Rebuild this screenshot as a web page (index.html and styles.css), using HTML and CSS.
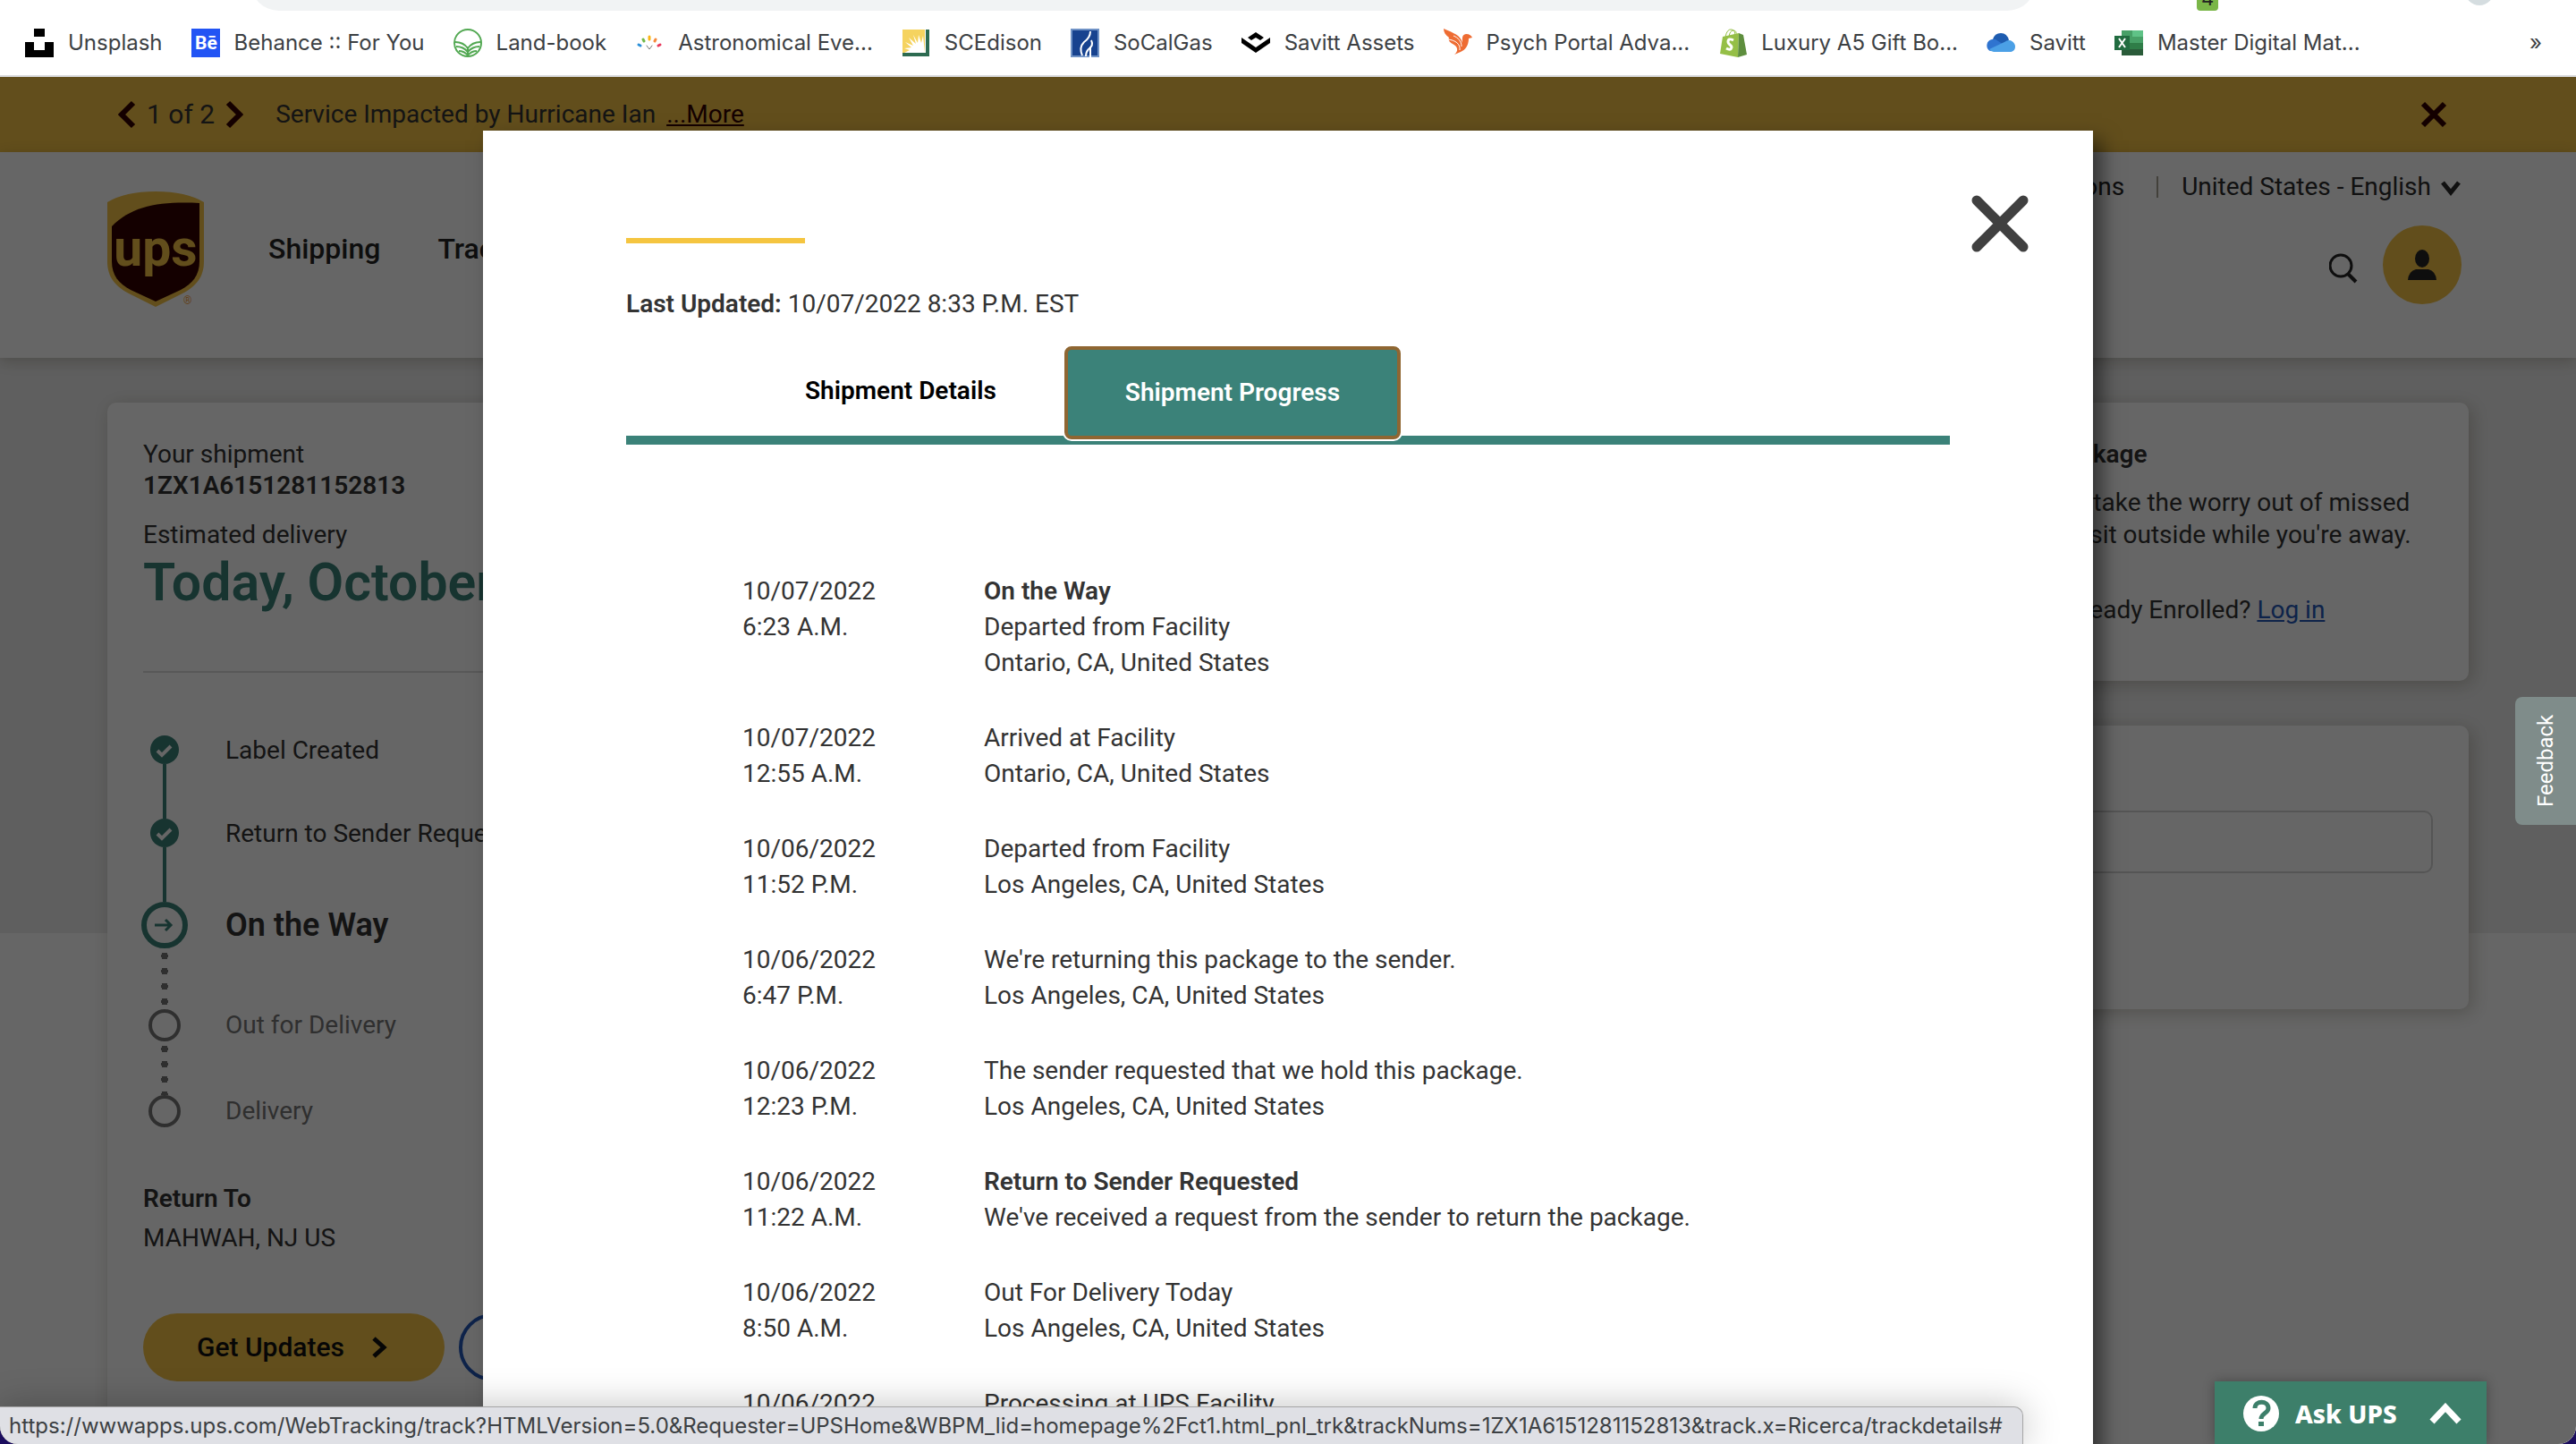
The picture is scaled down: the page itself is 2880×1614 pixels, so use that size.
FILE: index.html
```html
<!DOCTYPE html>
<html lang="en">
<head>
<meta charset="utf-8">
<title>UPS Tracking</title>
<link rel="stylesheet" href="styles.css">
</head>
<body>
<div class="window">
  <div class="chrome">
    <div class="toolbar">
      <div class="omnibox"></div>
      <span class="badge">4</span>
      <span class="avatar"></span>
    </div>
    <nav class="bookmarks" aria-label="Bookmarks">
      <a href="#"><svg viewBox="0 0 32 32"><path d="M10 0h12v9H10zM0 15h10v9h12v-9h10v17H0z"/></svg>Unsplash</a>
      <a href="#"><svg viewBox="0 0 32 32"><path fill="#2254f4" d="M0 0h32v32H0z"/><text x="4" y="23" font-family="Roboto, sans-serif" font-size="21" font-weight="700" fill="#fff">Bē</text></svg>Behance :: For You</a>
      <a href="#"><svg viewBox="0 0 32 32" fill="none" stroke="#52a852" stroke-width="2"><circle cx="16" cy="16" r="15"/><path d="M2 15q9 0 14 7 5-7 14-7M3 20q8 0 13 6 5-6 13-6M6 25q6 0 10 5 4-5 10-5M16 20v11"/></svg>Land-book</a>
      <a href="#"><svg viewBox="0 0 32 32" fill="none" stroke-width="3" stroke-linecap="round"><path stroke="#fbb615" d="M16 9v3"/><path stroke="#72b84c" d="M9 12l1 2"/><path stroke="#f58a3c" d="M23 12l-1 2"/><path stroke="#2b90d9" d="M4 18l2 1"/><path stroke="#e8375b" d="M28 18l-2 1"/><path stroke="#777" stroke-width="1" d="M13 19l3 4 3-4"/></svg>Astronomical Eve...</a>
      <a href="#"><svg viewBox="0 0 32 32"><path fill="#f5d35f" d="M1 1h25v26H1z"/><path fill="#2d6b51" d="M27 1h4v30H1v-4h26z"/><path fill="#fff" d="M26 27H3l6-3-6-2 8-1-7-6 9 4-5-9 8 7-3-10 5 9 1-9 3 9 2-8z"/></svg>SCEdison</a>
      <a href="#"><svg viewBox="0 0 32 32"><path fill="#6f92c6" d="M0 0h32v32H0z"/><path fill="#17428f" d="M2 2h28v28H2z"/><path fill="none" stroke="#fff" stroke-width="2" d="M22 3q0 7-7 12-6 6-2 15M23 13q3 6-3 10-3 3-3 8M22 20v12"/></svg>SoCalGas</a>
      <a href="#"><svg viewBox="0 0 32 32"><path d="M16 4l9 6-4 3-5-3-5 3-4-3zM0 10l16 11 16-11v6L16 27 0 16z"/></svg>Savitt Assets</a>
      <a href="#"><svg viewBox="0 0 32 32"><path fill="#ee6c33" d="M0 0c11 5 19 7 21 16 0-5-1-9 4-10 4 0 6 2 7 4l-4 1c0 8-4 13-9 15l-7 3c5-4 4-9-2-12-4-2-5-5-4-7C2 7 0 4 0 0z"/><path fill="none" stroke="#fff" d="M5 12c8 1 14 5 13 12M11 8c5 2 9 6 9 12"/></svg>Psych Portal Adva...</a>
      <a href="#"><svg viewBox="0 0 32 32"><path fill="none" stroke="#95bf47" stroke-width="1" d="M8 9q2-9 7-8t3 7M12 9q1-7 5-7t3 6"/><path fill="#95bf47" d="M5 9l18-4-1 27L2 28z"/><path fill="#5e8e3e" d="M23 5l5 2 4 22-10 3z"/><path fill="none" stroke="#fff" stroke-width="3" d="M17 13q-6-3-6 2c0 3 4 3 4 6q-1 4-6 1"/></svg>Luxury A5 Gift Bo...</a>
      <a href="#"><svg viewBox="0 0 32 32"><path fill="#1e5cb0" d="M7 12q2-7 9-7t9 8l-8 6z"/><path fill="#2f74d0" d="M6 12a8 8 0 0 1 7 2l11 7-20 4a7 7 0 0 1 2-13z"/><path fill="#4ba0e6" d="M3 23l17-8a8 7 0 0 1 6-2c8 2 8 13 0 13H8q-3 0-5-3z"/></svg>Savitt</a>
      <a href="#"><svg viewBox="0 0 32 32"><path fill="#47a067" d="M8 2h24v28H8z"/><path fill="#5fc287" d="M20 2h12v7H20z"/><path fill="#2f7d48" d="M8 16h24v7H8z"/><path fill="#2a5b39" d="M8 23h24v7H8z"/><path fill="#216c40" d="M0 8h17v16H0z"/><path fill="none" stroke="#fff" stroke-width="2" d="M5 11l7 10M12 11L5 21"/></svg>Master Digital Mat...</a>
      <button class="overflow" aria-label="More bookmarks">»</button>
    </nav>
  </div>

  <div class="viewport">
    <div class="page">
      <div class="notice">
        <button aria-label="Previous alert"><svg width="20" height="32" viewBox="0 0 20 32"><path d="M17 3L4 16l13 13"/></svg></button>
        <span class="count">1 of 2</span>
        <button aria-label="Next alert"><svg width="20" height="32" viewBox="0 0 20 32"><path d="M3 3l13 13L3 29"/></svg></button>
        <p>Service Impacted by Hurricane Ian</p>
        <a href="#">...More</a>
        <button class="dismiss" aria-label="Dismiss alert"><svg width="30" height="30" viewBox="0 0 30 30"><path d="M3 3l24 24M27 3L3 27"/></svg></button>
      </div>

      <header class="header">
        <a class="logo" href="#" aria-label="UPS home">
          <svg width="108" height="130" viewBox="0 0 108 130">
            <path fill="#f5c346" d="M0 12Q20 0 54 0t54 12v66c0 18-9 28-24 36l-30 15-30-15C9 106 0 96 0 78z"/>
            <path fill="#300" d="M5 39C28 16 58 11 103 13v65c0 16-8 25-21 32l-28 13-28-13C13 103 5 94 5 78z"/>
            <text x="54" y="83" text-anchor="middle" font-family="Roboto, sans-serif" font-size="57" font-weight="700" fill="#f5c346">ups</text>
            <text x="85" y="126" font-family="Roboto, sans-serif" font-size="12" fill="#f5a346">®</text>
          </svg>
        </a>
        <nav class="nav" aria-label="Main">
          <a href="#">Shipping</a>
          <a href="#">Tracking</a>
        </nav>
        <div class="tools">
          <div class="locale">
            <a href="#">Locations</a>
            <span class="rule"></span>
            <button>United States - English <svg width="24" height="22" viewBox="0 0 24 22"><path d="M3 6l9 11 9-11" fill="none" stroke="#2b2b2b" stroke-width="5"/></svg></button>
          </div>
          <div class="actions">
            <button class="search" aria-label="Search"><svg width="32" height="34" viewBox="0 0 32 34"><g fill="none" stroke="#242424" stroke-width="3"><circle cx="13" cy="14" r="12"/><path stroke-width="4" d="M21 23l9 9"/></g></svg></button>
            <button class="account" aria-label="Account"><svg width="32" height="34" viewBox="0 0 32 34"><ellipse cx="16" cy="10" rx="8" ry="10" fill="#242424"/><path fill="#242424" d="M0 34q1-10 9-12h14q8 2 9 12z"/></svg></button>
          </div>
        </div>
      </header>

      <main class="main">
        <section class="card shipment">
          <p>Your shipment</p>
          <p><strong>1ZX1A6151281152813</strong></p>
          <p class="estimate">Estimated delivery</p>
          <h1>Today, October 7</h1>
          <ol class="steps">
            <li><span class="track"><svg class="done" viewBox="0 0 32 32"><circle cx="16" cy="16" r="16"/><path d="M8 17l5 5 10-10"/></svg><i class="line"></i></span><span class="label">Label Created</span></li>
            <li><span class="track"><svg class="done" viewBox="0 0 32 32"><circle cx="16" cy="16" r="16"/><path d="M8 17l5 5 10-10"/></svg><i class="line"></i></span><span class="label">Return to Sender Requested</span></li>
            <li class="current"><span class="track"><svg class="now" viewBox="0 0 52 52"><circle cx="26" cy="26" r="23"/><path d="M15 26h18M27 20l6 6-6 6"/></svg><i class="dots"></i></span><span class="label">On the Way</span></li>
            <li class="pending"><span class="track"><i class="ring"></i><i class="dots"></i></span><span class="label">Out for Delivery</span></li>
            <li class="pending"><span class="track"><i class="ring"></i></span><span class="label">Delivery</span></li>
          </ol>
          <div class="return"><strong>Return To</strong><br>MAHWAH, NJ US</div>
          <div class="buttons">
            <button class="primary">Get Updates <svg width="18" height="26" viewBox="0 0 18 26"><path d="M3 3l11 10L3 23" fill="none" stroke="#111" stroke-width="5"/></svg></button>
            <button class="secondary">View Details</button>
          </div>
        </section>
        <div class="side">
          <section class="card choice">
            <h2>Peace of Mind with Your Package</h2>
            <p>UPS My Choice can help you take the worry out of missed<br>deliveries so packages don't sit outside while you're away.</p>
            <div class="enroll">Already Enrolled? <a href="#">Log in</a></div>
          </section>
          <section class="card lookup">
            <label for="number">Track Another</label>
            <input id="number" type="text">
          </section>
        </div>
      </main>
    </div>

    <div class="scrim"></div>

    <div class="modal" role="dialog" aria-label="Shipment progress">
      <button class="close" aria-label="Close"><svg width="64" height="64" viewBox="0 0 64 64"><path d="M6 6l52 52M58 6L6 58" fill="none" stroke="#404040" stroke-width="11" stroke-linecap="round"/></svg></button>
      <div class="accent"></div>
      <p class="updated"><strong>Last Updated:</strong> 10/07/2022 8:33 P.M. EST</p>
      <div class="tabs" role="tablist">
        <button role="tab">Shipment Details</button>
        <button role="tab" class="active" aria-selected="true">Shipment Progress</button>
      </div>
      <table class="events">
        <tr><td>10/07/2022<br>6:23 A.M.</td><td><strong>On the Way</strong><br>Departed from Facility<br>Ontario, CA, United States</td></tr>
        <tr><td>10/07/2022<br>12:55 A.M.</td><td>Arrived at Facility<br>Ontario, CA, United States</td></tr>
        <tr><td>10/06/2022<br>11:52 P.M.</td><td>Departed from Facility<br>Los Angeles, CA, United States</td></tr>
        <tr><td>10/06/2022<br>6:47 P.M.</td><td>We're returning this package to the sender.<br>Los Angeles, CA, United States</td></tr>
        <tr><td>10/06/2022<br>12:23 P.M.</td><td>The sender requested that we hold this package.<br>Los Angeles, CA, United States</td></tr>
        <tr><td>10/06/2022<br>11:22 A.M.</td><td><strong>Return to Sender Requested</strong><br>We've received a request from the sender to return the package.</td></tr>
        <tr><td>10/06/2022<br>8:50 A.M.</td><td>Out For Delivery Today<br>Los Angeles, CA, United States</td></tr>
        <tr><td>10/06/2022</td><td>Processing at UPS Facility</td></tr>
      </table>
    </div>

    <button class="feedback">Feedback</button>
    <button class="ask"><svg width="40" height="40" viewBox="0 0 40 40"><circle cx="20" cy="20" r="20" fill="#fff"/><path d="M13 14c0-9 15-9 15 0 0 6-8 5-8 12" fill="none" stroke="#3d7f6a" stroke-width="5"/><path fill="#3d7f6a" d="M17 29h6v5h-6z"/></svg>Ask UPS<svg class="up" width="36" height="24" viewBox="0 0 36 24"><path d="M3 21L18 5l15 16" fill="none" stroke="#fff" stroke-width="7"/></svg></button>
    <div class="status">https://wwwapps.ups.com/WebTracking/track?HTMLVersion=5.0&amp;Requester=UPSHome&amp;WBPM_lid=homepage%2Fct1.html_pnl_trk&amp;trackNums=1ZX1A6151281152813&amp;track.x=Ricerca/trackdetails#</div>
  </div>
</div>
</body>
</html>
```
FILE: styles.css
```css
* { box-sizing: border-box; }

body {
  margin: 0;
  background: #1b0d5e;
  color: #333;
  font: 28px/36px Roboto, sans-serif;
}

p, h1, h2, ol { margin: 0; padding: 0; }
strong { font-weight: 600; }
button {
  padding: 0;
  border: 0;
  background: none;
  color: inherit;
  font: inherit;
}
svg { display: block; flex: none; }

.window {
  display: flex;
  flex-direction: column;
  height: 100vh;
  overflow: hidden;
  border-radius: 0 0 20px 20px;
  background: #fff;
}

/* browser chrome */
.chrome {
  flex: none;
  border-bottom: 2px solid #d9dadd;
  color: #3c4043;
  font: 24px/32px Inter, Roboto, sans-serif;
}
.toolbar {
  display: flex;
  align-items: flex-end;
  height: 12px;
  padding: 0 92px 0 280px;
  overflow: hidden;
}
.omnibox {
  flex: 1;
  height: 64px;
  margin-right: 180px;
  border-radius: 32px;
  background: #f1f3f4;
}
.badge {
  width: 24px;
  height: 28px;
  border-radius: 4px;
  background: #7ab648;
  color: #222;
  font-size: 22px;
  line-height: 28px;
  text-align: center;
}
.avatar {
  width: 32px;
  height: 32px;
  margin: 0 0 6px 276px;
  border-radius: 50%;
  background: #d5dde0;
}
.bookmarks {
  display: flex;
  gap: 32px;
  padding: 20px 38px 20px 28px;
}
.bookmarks a {
  display: flex;
  gap: 16px;
  color: inherit;
  text-decoration: none;
  white-space: nowrap;
}
.bookmarks svg { width: 32px; height: 32px; }
.overflow { margin-left: auto; }

.viewport {
  position: relative;
  flex: 1;
  overflow: hidden;
}

/* page under the dialog */
.page { background: linear-gradient(#eee 957px, #fff 957px); }
.notice {
  display: flex;
  align-items: center;
  height: 84px;
  padding: 0 144px 0 132px;
  background: #f5c346;
}
.notice path { fill: none; stroke: #300; stroke-width: 6; }
.notice p { margin: 0 12px 0 36px; }
.notice a { color: #300; }
.count { margin: 0 12px; font-size: 30px; }
.dismiss { margin-left: auto; }

.header {
  position: relative;
  display: flex;
  align-items: flex-start;
  height: 230px;
  padding: 0 128px 0 120px;
  background: #fff;
  box-shadow: 0 4px 16px rgba(60, 50, 20, .25);
}
.logo { margin-top: 44px; }
.nav {
  display: flex;
  gap: 64px;
  margin: 88px 0 0 72px;
  font-size: 32px;
  font-weight: 500;
  line-height: 40px;
}
.nav a, .locale a { color: #242424; text-decoration: none; }
.tools {
  display: flex;
  flex-direction: column;
  align-items: flex-end;
  gap: 23px;
  margin: 19px 0 0 auto;
}
.locale {
  display: flex;
  align-items: center;
  line-height: 40px;
  color: #2b2b2b;
}
.locale .rule {
  width: 2px;
  height: 24px;
  margin: 0 26px 0 36px;
  background: #a9a294;
}
.locale button { display: flex; align-items: center; gap: 10px; }
.actions { display: flex; align-items: center; gap: 28px; }
.search { padding-top: 8px; }
.account {
  display: grid;
  place-items: center;
  width: 88px;
  height: 88px;
  border-radius: 50%;
  background: #f5c346;
}

.main {
  display: grid;
  grid-template-columns: 1fr 820px;
  gap: 50px;
  align-items: start;
  padding: 50px 120px;
}
.card {
  border-radius: 10px;
  background: #fff;
  box-shadow: 4px 4px 20px rgba(60, 50, 20, .25);
}
.shipment { padding: 40px 40px 100px; }
.shipment p { line-height: 35px; }
.shipment .estimate { margin-top: 20px; }
h1 {
  padding-bottom: 63px;
  border-bottom: 2px solid #ddd;
  color: #3b8279;
  font-size: 59px;
  font-weight: 600;
  line-height: 72px;
}
.steps { margin-top: 70px; list-style: none; }
.steps li { display: flex; gap: 44px; }
.track {
  display: flex;
  flex-direction: column;
  align-items: center;
  width: 48px;
}
.label { line-height: 34px; }
.done { width: 32px; }
.done circle { fill: #3b8279; }
.done path { fill: none; stroke: #fff; stroke-width: 4; }
.now { width: 52px; }
.now circle { fill: none; stroke: #3b8279; stroke-width: 6; }
.now path { fill: none; stroke: #3b8279; stroke-width: 3; }
.line { width: 4px; height: 61px; background: #3b8279; }
.ring { width: 36px; height: 36px; border: 4px solid #777; border-radius: 50%; }
.dots {
  width: 8px;
  height: 68px;
  background: radial-gradient(circle, #777 4px, transparent 4px) 0 0 / 8px 17px;
}
.pending .dots { height: 60px; }
.current .label { font-size: 36px; font-weight: 600; line-height: 52px; }
.pending { color: #777; }
.pending .label { line-height: 36px; }
.return { margin-top: 58px; line-height: 44px; }
.buttons { display: flex; align-items: center; gap: 16px; margin-top: 62px; }
.buttons button { height: 76px; border-radius: 38px; font-size: 30px; }
.primary {
  display: flex;
  align-items: center;
  gap: 30px;
  padding: 0 64px 0 60px;
  background: #f5c346;
  color: #111;
  font-weight: 500;
}
.buttons .secondary {
  padding: 0 48px;
  border: 4px solid #2458b8;
  color: #2458b8;
}
.side { display: grid; gap: 50px; }
.choice { height: 311px; padding: 38px 40px; }
h2 { font-size: 28px; font-weight: 600; line-height: 40px; }
.choice p { margin-top: 16px; white-space: nowrap; }
.enroll { margin-top: 48px; padding-left: 322px; }
.enroll a { color: #2458b8; }
.lookup { height: 317px; padding: 38px 40px; }
.lookup label { display: block; line-height: 40px; }
.lookup input {
  display: block;
  width: 100%;
  height: 70px;
  margin-top: 17px;
  border: 2px solid #d5d5d5;
  border-radius: 10px;
  background: none;
}

.scrim {
  position: absolute;
  inset: 0;
  background: rgba(0, 0, 0, .6);
}

/* dialog */
.modal {
  position: absolute;
  top: 60px;
  bottom: -40px;
  left: 0;
  right: 0;
  width: 62.5%;
  margin: 0 auto;
  padding: 120px 160px 0;
  overflow: hidden;
  background: #fff;
  box-shadow: 10px 10px 20px rgba(0, 0, 0, .5);
}
.close { position: absolute; top: 72px; right: 72px; }
.accent { width: 200px; height: 6px; background: #f5c540; }
.updated { margin-top: 48px; line-height: 40px; }
.tabs {
  display: flex;
  gap: 8px;
  align-items: center;
  height: 110px;
  margin-top: 27px;
  padding-left: 200px;
  border-bottom: 10px solid #3b8279;
  font-weight: 600;
}
.tabs button { padding-right: 68px; color: #000; }
.tabs .active {
  height: 104px;
  margin-bottom: -4px;
  padding: 0 64px;
  border: 4px solid #8f6632;
  border-radius: 8px;
  background: #3b8279;
  box-shadow: 0 0 0 2px #fff;
  color: #fff;
}
.events {
  margin: 144px 0 0 130px;
  border-collapse: collapse;
  line-height: 40px;
}
.events td { padding: 0 0 44px; vertical-align: top; }
.events td:first-child { width: 270px; }

/* floating controls */
.feedback {
  position: absolute;
  top: 693px;
  right: 0;
  width: 68px;
  height: 143px;
  border-radius: 0 8px 8px 0;
  background: #7f8c8a;
  color: #fff;
  font-size: 24px;
  writing-mode: vertical-rl;
  transform: rotate(180deg);
}
.ask {
  position: absolute;
  right: 100px;
  bottom: 0;
  display: flex;
  align-items: center;
  gap: 18px;
  width: 304px;
  height: 70px;
  padding: 2px 28px 0 32px;
  background: #3d7f6a;
  box-shadow: 0 0 12px rgba(0, 0, 0, .3);
  color: #fff;
  font: 800 28px/36px "Noto Sans", sans-serif;
}
.ask .up { margin-left: auto; }
.status {
  position: absolute;
  left: 0;
  bottom: 0;
  padding: 3px 22px 2px 10px;
  border: solid #a5a5a5;
  border-width: 1px 1px 0 0;
  border-radius: 0 10px 0 0;
  background: #dfe0e5;
  box-shadow: 0 0 40px rgba(0, 0, 0, .25);
  color: #3c4043;
  font: 24px/36px Inter, Roboto, sans-serif;
  white-space: nowrap;
}
```
